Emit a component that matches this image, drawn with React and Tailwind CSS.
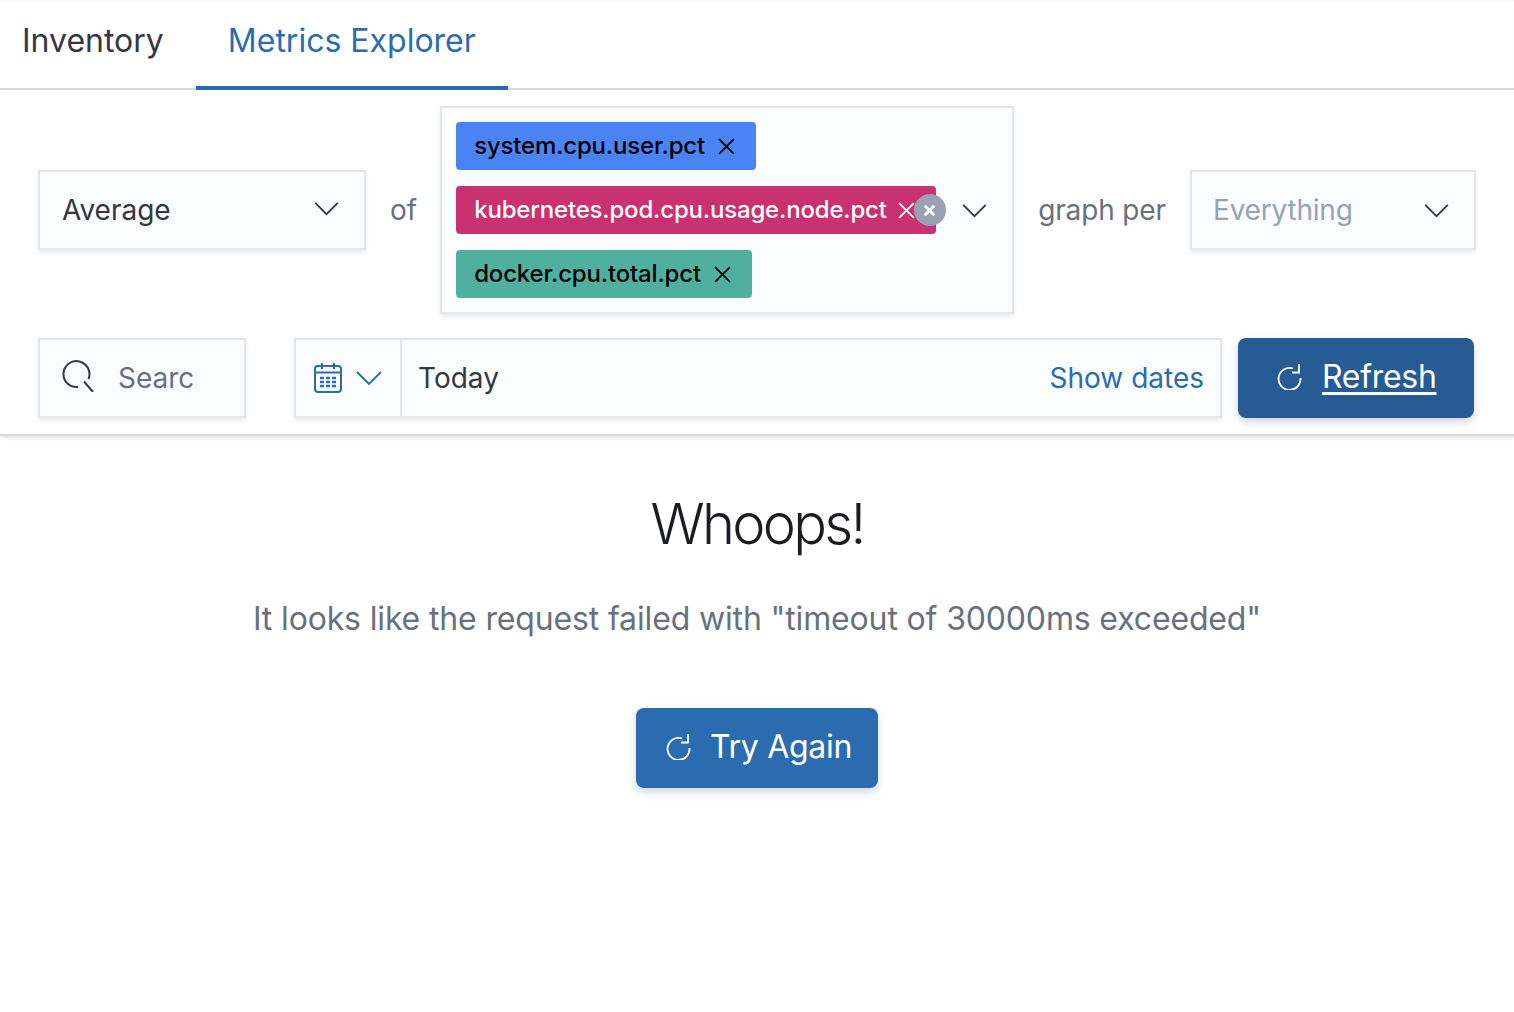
import React from 'react';

const Chevron = ({ className }) => (
    <svg className={className} viewBox="0 0 26 16" fill="none" stroke="currentColor" strokeWidth="1.9">
        <path d="M1 2l12 12L25 2" />
    </svg>
);

const Cross = ({ className, weight = 1.7 }) => (
    <svg className={className} viewBox="0 0 16 16" fill="none" stroke="currentColor" strokeWidth={weight}>
        <path d="M1 1l14 14M15 1L1 15" />
    </svg>
);

const RefreshIcon = ({ className }) => (
    <svg className={className} viewBox="0 0 26 26" fill="none" stroke="currentColor" strokeWidth="1.8">
        <path d="M17 4.5A11 11 0 1 0 24.5 14" />
        <path d="M23 0v8.5h-7" />
    </svg>
);

const Calendar = () => (
    <svg className="w-[28px] h-[30px] text-[#2b6cb0]" viewBox="0 0 28 30" fill="none" stroke="currentColor" strokeWidth="2">
        <rect x="1" y="3" width="26" height="26" rx="3" />
        <path d="M1 9.5h26M8 0v6M20 0v6" />
        <path strokeWidth="2.4" strokeDasharray="4 2" d="M6 15h17M6 19h17M6 23h17" />
    </svg>
);

const Pill = ({ color, text, children }) => (
    <div className={`h-[48px] flex items-center pl-[18px] pr-[21px] rounded-[4px] whitespace-nowrap text-[24px] tracking-[-0.17px] font-medium ${color} ${text}`}>
        {children}
    </div>
);

const inputBox = 'shrink-0 bg-[#fbfcfd] border-2 border-[#e3e5e9] shadow-[0_3px_4px_rgba(152,162,179,0.2)]';

export default function App() {
    return (
        <div className="min-h-[1012px] bg-white font-['Inter',sans-serif]">
            {/* Tabs */}
            <div className="h-[90px] flex border-b-2 border-[#d3dae6] shadow-[inset_0_3px_3px_-2px_rgba(152,162,179,0.15)]">
                <div className="pl-[22px] pr-[32px] pb-[7px] flex items-center text-[32px] text-[#343741]">Inventory</div>
                <div className="px-[32px] pb-[5px] flex items-center text-[32px] text-[#2b6cb0] border-b-4 border-[#2b6cb0] h-[90px]">Metrics Explorer</div>
            </div>

            {/* Toolbar */}
            <div className="h-[346px] px-[38px] pt-4 flex flex-col gap-6 border-b-2 border-[#d3dae6] shadow-[0_2px_3px_rgba(152,162,179,0.3)]">
                <div className="flex items-center">
                    <div className={`w-[328px] h-[80px] pl-[22px] pr-[25px] flex items-center justify-between text-[28px] text-[#343741] ${inputBox}`}>
                        Average
                        <Chevron className="w-[25px] h-[15px] -mt-1" />
                    </div>
                    <div className="ml-[24px] mr-[23px] text-[28px] text-[#69707d]">of</div>
                    <div className={`w-[574px] h-[208px] pl-[14px] pr-[25px] flex items-center justify-between ${inputBox}`}>
                        <div className="flex flex-col items-start gap-4">
                            <Pill color="bg-[#4a83f3]" text="text-black">
                                system.cpu.user.pct
                                <Cross className="w-[17px] h-[17px] ml-[13px]" />
                            </Pill>
                            <div className="relative">
                                <Pill color="bg-[#c93170]" text="text-white">
                                    kubernetes.pod.cpu.usage.node.pct
                                    <Cross className="w-[17px] h-[17px] ml-[11px]" />
                                </Pill>
                                <div className="absolute right-[-10px] top-[8px] w-[32px] h-[32px] rounded-full bg-[#98a2b3] flex items-center justify-center text-white">
                                    <Cross className="w-[11px] h-[11px]" weight={4} />
                                </div>
                            </div>
                            <Pill color="bg-[#4fb0a0]" text="text-black">
                                docker.cpu.total.pct
                                <Cross className="w-[17px] h-[17px] ml-[13px]" />
                            </Pill>
                        </div>
                        <Chevron className="w-[25px] h-[15px] text-[#343741]" />
                    </div>
                    <div className="ml-[24px] w-[128px] mr-[24px] whitespace-nowrap text-[28px] tracking-[-0.15px] text-[#69707d]">graph per</div>
                    <div className={`w-[286px] h-[80px] pl-[21px] pr-[25px] flex items-center justify-between text-[28px] tracking-[-0.2px] text-[#98a2b3] ${inputBox}`}>
                        Everything
                        <Chevron className="w-[25px] h-[15px] text-[#343741]" />
                    </div>
                </div>

                <div className="flex items-center">
                    <div className={`w-[208px] h-[80px] pl-[22px] flex items-center text-[28px] text-[#69707d] ${inputBox}`}>
                        <svg className="w-[32px] h-[32px] text-[#343741] -mt-1" viewBox="0 0 32 32" fill="none" stroke="currentColor" strokeWidth="2">
                            <path d="M16 27A13 13 0 1 1 26.5 19" />
                            <path d="M22 21.5l9 10.5" />
                        </svg>
                        <span className="ml-[24px]">Searc</span>
                    </div>
                    <div className={`ml-[48px] w-[928px] h-[80px] flex items-center ${inputBox}`}>
                        <div className="w-[106px] h-full pl-[18px] flex items-center gap-[14px] border-r-2 border-[#e3e5e9]">
                            <Calendar />
                            <Chevron className="w-[26px] h-[16px] text-[#2b6cb0]" />
                        </div>
                        <div className="flex-1 pl-[16px] pr-[16px] flex items-center justify-between text-[28px]">
                            <span className="text-[#343741]">Today</span>
                            <span className="text-[#2b6cb0]">Show dates</span>
                        </div>
                    </div>
                    <div className="ml-[16px] w-[236px] h-[80px] pl-[38px] flex items-center gap-[20px] rounded-[8px] bg-[#275b93] text-white text-[32px] tracking-[-0.3px] shadow-[0_4px_8px_rgba(152,162,179,0.45)]">
                        <RefreshIcon className="w-[26px] h-[26px] -mt-[2px]" />
                        <span className="underline underline-offset-4 -mt-[2px]">Refresh</span>
                    </div>
                </div>
            </div>

            {/* Error message */}
            <div className="flex flex-col items-center">
                <h1 className="mt-[50px] text-[56px] leading-[76px] font-light tracking-[-2.7px] text-[#1a1c21]">Whoops!</h1>
                <p className="mt-[34px] -translate-y-px text-[32px] leading-[48px] tracking-[-0.15px] text-[#69707d]">It looks like the request failed with "timeout of 30000ms exceeded"</p>
                <div className="mt-[64px] w-[242px] h-[80px] pl-[29px] flex items-center gap-[19px] rounded-[8px] bg-[#2b6cb0] text-white text-[32px] tracking-[-0.3px] shadow-[0_4px_8px_rgba(152,162,179,0.45)]">
                    <RefreshIcon className="w-[26px] h-[26px] -mt-[2px]" />
                    <span className="-mt-[2px]">Try Again</span>
                </div>
            </div>
        </div>
    );
}
